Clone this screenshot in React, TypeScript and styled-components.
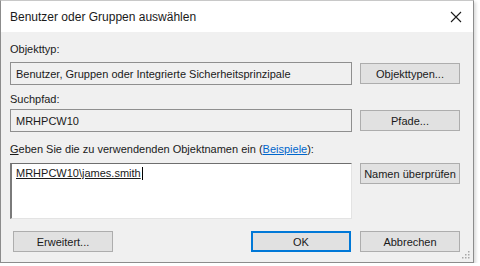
import styled, { createGlobalStyle } from "styled-components";

const GlobalStyle = createGlobalStyle`
  html, body {
    margin: 0;
    padding: 0;
    background: #ffffff;
  }
  body {
    font-family: "Liberation Sans", Arial, sans-serif;
    font-size: 11px;
    color: #000;
  }
`;

export default function App() {
  return (
    <>
      <GlobalStyle />
      <Window>
        <TitleBar>
          <Title>Benutzer oder Gruppen auswählen</Title>
          <CloseIcon width="12" height="12" viewBox="0 0 12 12">
            <path d="M1 1 L11 11 M11 1 L1 11" stroke="#1a1a1a" strokeWidth="1.1" />
          </CloseIcon>
        </TitleBar>

        <Body>
          <FieldLabel $top={0} $bottom={6}>Objekttyp:</FieldLabel>
          <FieldRow>
            <ReadOnlyField>Benutzer, Gruppen oder Integrierte Sicherheitsprinzipale</ReadOnlyField>
            <DialogButton>Objekttypen...</DialogButton>
          </FieldRow>

          <FieldLabel $top={8} $bottom={3}>Suchpfad:</FieldLabel>
          <FieldRow>
            <ReadOnlyField>MRHPCW10</ReadOnlyField>
            <DialogButton>Pfade...</DialogButton>
          </FieldRow>

          <FieldLabel $top={11} $bottom={7}>
            <u>G</u>eben Sie die zu verwendenden Objektnamen ein (<Link>Beispiele</Link>):
          </FieldLabel>
          <FieldRow $alignTop>
            <NamesBox>
              <ResolvedName>MRHPCW10\james.smith</ResolvedName>
            </NamesBox>
            <DialogButton>Namen überprüfen</DialogButton>
          </FieldRow>

          <Footer>
            <DialogButton $wide>Erweitert...</DialogButton>
            <Spacer />
            <DialogButton $default>OK</DialogButton>
            <DialogButton>Abbrechen</DialogButton>
          </Footer>
        </Body>

        <Grip width="8" height="8" viewBox="0 0 8 8">
          <rect x="6" y="0" width="1.5" height="1.5" fill="#a8a8a8" />
          <rect x="3" y="3" width="1.5" height="1.5" fill="#a8a8a8" />
          <rect x="6" y="3" width="1.5" height="1.5" fill="#a8a8a8" />
          <rect x="0" y="6" width="1.5" height="1.5" fill="#a8a8a8" />
          <rect x="3" y="6" width="1.5" height="1.5" fill="#a8a8a8" />
          <rect x="6" y="6" width="1.5" height="1.5" fill="#a8a8a8" />
        </Grip>
      </Window>
    </>
  );
}

const Window = styled.div`
  position: relative;
  box-sizing: border-box;
  width: 474px;
  height: 263px;
  display: flex;
  flex-direction: column;

  background: #f0f0f0;
  border: 1px solid #8c8c8c;
  border-top-color: #c8c8c8;
  box-shadow: 2px 2px 3px rgba(0, 0, 0, 0.15);
`;

const TitleBar = styled.div`
  height: 31px;
  display: flex;
  align-items: center;
  justify-content: space-between;
  padding: 0 11px 0 9px;

  background: #ffffff;
`;

const Title = styled.span`
  font-size: 12px;
  color: #1a1a1a;
`;

const CloseIcon = styled.svg`
  display: block;
  margin-top: 1px;
`;

const Body = styled.div`
  display: flex;
  flex-direction: column;
  padding: 11px 13px 0 9px;
`;

const FieldLabel = styled.div<{ $top: number; $bottom: number }>`
  height: 13px;
  line-height: 13px;
  margin-top: ${(p) => p.$top}px;
  margin-bottom: ${(p) => p.$bottom}px;
  color: #1a1a1a;
  white-space: nowrap;
`;

const Link = styled.span`
  color: #0066cc;
  text-decoration: underline;
`;

const FieldRow = styled.div<{ $alignTop?: boolean }>`
  display: grid;
  grid-template-columns: 342px 100px;
  column-gap: 8px;
  align-items: ${(p) => (p.$alignTop ? "start" : "center")};
`;

const ReadOnlyField = styled.div`
  box-sizing: border-box;
  height: 23px;
  display: flex;
  align-items: center;
  padding: 0 5px;

  background: #f0f0f0;
  border: 1px solid #8f8f8f;
  color: #1a1a1a;
  white-space: nowrap;
  overflow: hidden;
`;

const NamesBox = styled.div`
  box-sizing: border-box;
  height: 56px;
  padding: 3px 4px;

  background: #ffffff;
  border: 1px solid #e3e3e3;
  border-top-color: #6e6e6e;
  border-left: 2px solid #7a7a7a;
`;

const ResolvedName = styled.span`
  display: inline-block;
  line-height: 13px;
  color: #1a1a1a;
  text-decoration: underline;
  border-right: 1px solid #000;
  padding-right: 1px;
`;

const DialogButton = styled.button<{ $default?: boolean; $wide?: boolean }>`
  box-sizing: border-box;
  width: 100px;
  height: 21px;
  padding: 0;
  margin-left: ${(p) => (p.$wide ? "3px" : "0")};

  font-family: "Liberation Sans", Arial, sans-serif;
  font-size: 11px;
  color: #1a1a1a;

  background: #e1e1e1;
  border: 1px solid ${(p) => (p.$default ? "#0078d7" : "#adadad")};
  box-shadow: ${(p) => (p.$default ? "inset 0 0 0 1px #0078d7" : "none")};
`;

const Footer = styled.div`
  display: flex;
  align-items: center;
  gap: 9px;
  margin-top: 12px;
`;

const Spacer = styled.div`
  flex: 1;
`;

const Grip = styled.svg`
  position: absolute;
  right: 3px;
  bottom: 3px;
`;
